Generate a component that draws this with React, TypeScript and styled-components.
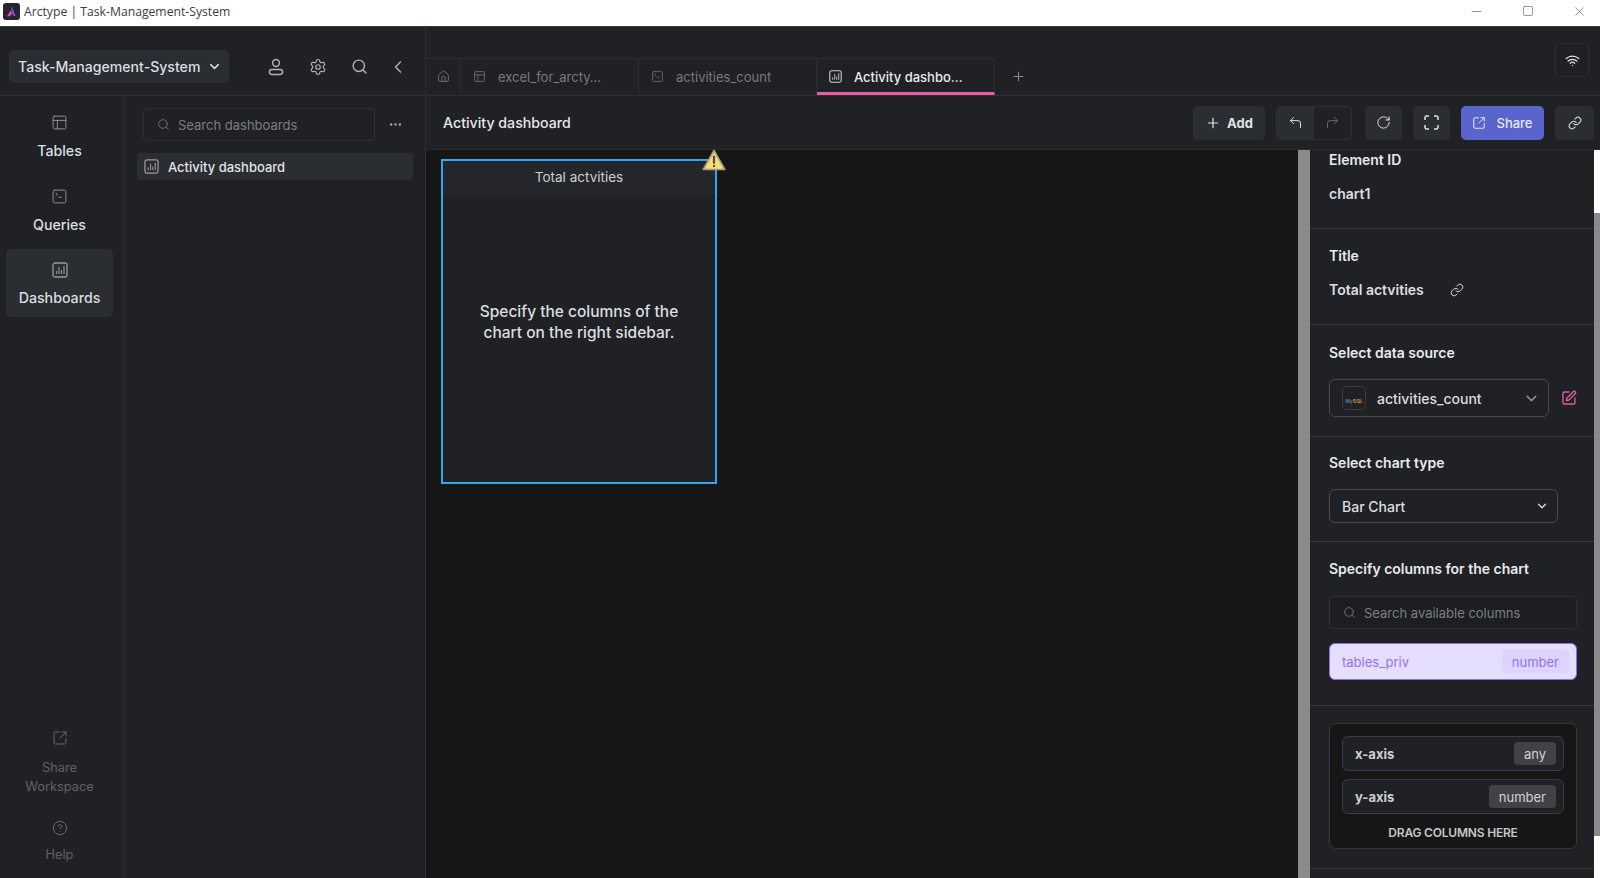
import React from "react";
import styled, { createGlobalStyle } from "styled-components";
import {
  ChevronDown,
  ChevronLeft,
  CircleHelp,
  CornerUpLeft,
  CornerUpRight,
  Ellipsis,
  Home,
  Link,
  Minus,
  PanelsTopLeft,
  Plus,
  RotateCw,
  Search,
  Settings,
  SquareArrowOutUpRight,
  SquarePen,
  SquareTerminal,
  Square,
  Wifi,
  X,
} from "lucide-react";

const GlobalStyle = createGlobalStyle`
  html, body {
    margin: 0;
    height: 100%;
    background: #1f2125;
    font-family: "Inter", "Liberation Sans", sans-serif;
    overflow: hidden;
  }
  * { box-sizing: border-box; }
`;

const Page = styled.div`
  width: 1600px;
  height: 878px;
  display: flex;
  flex-direction: column;
  background: #1f2125;
  color: #e8e9ea;
`;

const TitleBar = styled.div`
  height: 27px;
  flex: none;
  background: #fff;
  border-bottom: 1px solid #3a3c40;
  display: flex;
  align-items: center;
  padding: 0 0 4px 3px;
  color: #3c3c3c;
  font-family: "Open Sans", sans-serif;
  font-size: 12.2px;
`;

const LogoBox = styled.svg`
  width: 17px;
  height: 17px;
  margin-right: 4px;
`;

const WindowButtons = styled.div`
  margin-left: auto;
  display: flex;
  align-items: center;
  gap: 38px;
  padding-right: 13px;
  color: #555;
`;

const Body = styled.div`
  flex: 1;
  display: flex;
  min-height: 0;
`;

const LeftColumn = styled.div`
  width: 426px;
  flex: none;
  display: flex;
  flex-direction: column;
  border-right: 1px solid #2b2e33;
`;

const LeftHeader = styled.div`
  height: 69px;
  flex: none;
  display: flex;
  align-items: center;
  padding: 11px 0 0 9px;
  border-bottom: 1px solid #2e3136;
`;

const WorkspaceSelect = styled.div`
  width: 220px;
  height: 33px;
  border-radius: 5px;
  background: #2a2d32;
  display: flex;
  align-items: center;
  padding: 0 7px 0 9px;
  justify-content: space-between;
  font-size: 14.1px;
  font-weight: 500;
  white-space: nowrap;
  color: #dcdde0;
`;

const HeaderIcons = styled.div`
  display: flex;
  align-items: center;
  gap: 24px;
  margin-left: 38px;
  color: #aeb0b4;
`;

const CollapseIcon = styled(ChevronLeft)`
  margin-left: -4px;
`;

const LeftBody = styled.div`
  flex: 1;
  display: flex;
  min-height: 0;
`;

const Rail = styled.div`
  width: 125px;
  flex: none;
  border-right: 1px solid #2b2e33;
  padding: 7px 6px 0;
  display: flex;
  flex-direction: column;
`;

const RailItem = styled.div<{ $active?: boolean; $muted?: boolean; $h?: number; $gap?: number }>`
  width: 107px;
  height: ${(p) => p.$h ?? (p.$active ? 68 : 73)}px;
  border-radius: 5px;
  background: ${(p) => (p.$active ? "#2a2d32" : "transparent")};
  display: flex;
  flex-direction: column;
  align-items: center;
  padding-top: ${(p) => (p.$active ? 13 : p.$muted ? 12 : 11)}px;
  gap: ${(p) => p.$gap ?? (p.$muted ? 9 : 10)}px;
  font-size: ${(p) => (p.$muted ? 12.8 : 14.2)}px;
  font-weight: ${(p) => (p.$muted ? 400 : 500)};
  text-align: center;
  line-height: 19px;
  color: ${(p) => (p.$muted ? "#5f6165" : "#dcdde0")};
  svg {
    color: ${(p) => (p.$muted ? "#696b6f" : "#96989c")};
  }
`;

const RailBottom = styled.div`
  margin-top: auto;
  display: flex;
  flex-direction: column;
  gap: 2px;
  padding-bottom: 6px;
`;

const ListPanel = styled.div`
  flex: 1;
  padding: 12px 12px 0;
  display: flex;
  flex-direction: column;
  gap: 12px;
`;

const SearchRow = styled.div`
  display: flex;
  align-items: center;
  padding-left: 6px;
`;

const SearchBox = styled.div<{ $w?: number; $dim?: boolean }>`
  width: ${(p) => p.$w ?? 232}px;
  height: 33px;
  border: 1px solid #2e3136;
  border-radius: 4px;
  display: flex;
  align-items: center;
  gap: 8px;
  padding-left: 13px;
  font-size: 13px;
  color: #7c7e82;
  background: ${(p) => (p.$dim ? "#1c1e22" : "transparent")};
  svg {
    color: #6c6e72;
  }
`;

const MoreButton = styled.div`
  margin-left: 13px;
  color: #a2a4a8;
  display: flex;
`;

const ListRow = styled.div`
  height: 27px;
  border-radius: 3px;
  background: #2a2d32;
  display: flex;
  align-items: center;
  gap: 9px;
  padding-left: 7px;
  font-size: 13px;
  font-weight: 500;
  color: #e2e3e5;
  svg {
    color: #9a9ca0;
  }
`;

const Main = styled.div`
  flex: 1;
  min-width: 0;
  display: flex;
  flex-direction: column;
`;

const TabBar = styled.div`
  height: 69px;
  flex: none;
  display: flex;
  align-items: flex-end;
  border-bottom: 1px solid #2e3136;
  position: relative;
`;

const Tab = styled.div<{ $active?: boolean; $w?: number }>`
  width: ${(p) => p.$w ?? 178}px;
  height: 37px;
  display: flex;
  align-items: center;
  gap: 12px;
  padding: 2px 0 0 ${(p) => (p.$w ? 11 : 12)}px;
  border-top: 1px solid #2b2e33;
  border-right: 1px solid #2b2e33;
  border-bottom: 3px solid ${(p) => (p.$active ? "#ec5ca8" : "transparent")};
  border-top-right-radius: ${(p) => (p.$active ? 4 : 0)}px;
  font-size: 13px;
  font-weight: ${(p) => (p.$active ? 500 : 400)};
  color: ${(p) => (p.$active ? "#e8e9ea" : "#77797d")};
  svg {
    color: ${(p) => (p.$active ? "#cfd0d3" : "#77797d")};
  }
`;

const AddTab = styled.div`
  margin: 0 0 5px 0;
  padding-left: 16px;
  height: 28px;
  display: flex;
  align-items: center;
  color: #85878b;
`;

const WifiButton = styled.div`
  position: absolute;
  right: 11px;
  top: 16px;
  width: 34px;
  height: 34px;
  border: 1px solid #2e3136;
  border-radius: 5px;
  display: flex;
  align-items: center;
  justify-content: center;
  color: #dfe0e2;
`;

const Toolbar = styled.div`
  height: 54px;
  flex: none;
  display: flex;
  align-items: center;
  padding: 0 6px 0 17px;
  border-bottom: 1px solid #2a2c31;
  font-size: 14.2px;
  font-weight: 500;
  color: #e6e7e9;
`;

const ToolbarActions = styled.div`
  margin-left: auto;
  display: flex;
  align-items: center;
  gap: 11px;
`;

const ToolButton = styled.div<{ $w: number; $primary?: boolean }>`
  width: ${(p) => p.$w}px;
  height: 34px;
  border-radius: 5px;
  display: flex;
  align-items: center;
  justify-content: center;
  gap: ${(p) => (p.$primary ? 10 : 6)}px;
  background: ${(p) => (p.$primary ? "#5a64cd" : "#2a2d32")};
  color: ${(p) => (p.$primary ? "#e9eafa" : "#e1e2e4")};
  font-size: 13px;
  font-weight: ${(p) => (p.$primary ? 500 : 700)};
`;

const UndoGroup = styled.div`
  width: 76px;
  height: 34px;
  margin-right: 2px;
  border: 1px solid #2e3136;
  border-radius: 5px;
  display: flex;
  overflow: hidden;
`;

const UndoCell = styled.div<{ $on?: boolean }>`
  flex: 1;
  display: flex;
  align-items: center;
  justify-content: center;
  background: ${(p) => (p.$on ? "#2a2d32" : "transparent")};
  color: ${(p) => (p.$on ? "#dfe0e2" : "#66686c")};
`;

const Workspace = styled.div`
  flex: 1;
  display: flex;
  min-height: 0;
`;

const Canvas = styled.div`
  flex: 1;
  min-width: 0;
  background: #161617;
  padding: 9px 0 0 15px;
`;

const ChartCard = styled.div`
  position: relative;
  width: 276px;
  height: 325px;
  border: 2px solid #36a3ee;
  background: #1f2125;
  display: flex;
  flex-direction: column;
`;

const CardTitle = styled.div`
  height: 34px;
  flex: none;
  padding-bottom: 2px;
  background: #24262b;
  display: flex;
  align-items: center;
  justify-content: center;
  font-size: 13.5px;
  color: #cfd0d3;
`;

const CardBody = styled.div`
  flex: 1;
  display: flex;
  align-items: center;
  justify-content: center;
  text-align: center;
  padding: 0 28px 34px;
  font-size: 15.5px;
  font-weight: 500;
  line-height: 21px;
  color: #dcdde0;
`;

const WarningMark = styled.svg`
  position: absolute;
  top: -12px;
  right: -11px;
  width: 24px;
  height: 22px;
`;

const Gutter = styled.div`
  width: 12px;
  flex: none;
  background: #8a8a8a;
`;

const Props = styled.div`
  width: 284px;
  flex: none;
  overflow: hidden;
`;

const ScrollTrack = styled.div`
  width: 6px;
  flex: none;
  background: linear-gradient(
    #fff 0,
    #fff 63px,
    #8a8a8a 63px,
    #8a8a8a 686px,
    #fff 686px
  );
`;

const Section = styled.div<{ $top: number; $bottom: number; $gap?: number }>`
  padding: ${(p) => p.$top}px 17px ${(p) => p.$bottom}px 19px;
  border-bottom: 1px solid #36383c;
  display: flex;
  flex-direction: column;
  gap: ${(p) => p.$gap ?? 14}px;
`;

const Label = styled.div`
  font-size: 14px;
  font-weight: 600;
  line-height: 20px;
  color: #e8e9ea;
`;

const Value = styled.div`
  display: flex;
  align-items: center;
  gap: 26px;
  font-size: 14px;
  font-weight: 600;
  line-height: 20px;
  color: #dcdde0;
  svg {
    color: #d5d6d8;
  }
`;

const SourceRow = styled.div`
  display: flex;
  align-items: center;
  gap: 12px;
`;

const SelectBox = styled.div<{ $w: number; $h: number }>`
  width: ${(p) => p.$w}px;
  height: ${(p) => p.$h}px;
  border: 1px solid #4a4c50;
  border-radius: 6px;
  display: flex;
  align-items: center;
  justify-content: space-between;
  padding: 0 8px 0 12px;
  font-size: 14px;
  font-weight: 500;
  color: #dcdde0;
`;

const SourceName = styled.div`
  display: flex;
  align-items: center;
  gap: 11px;
`;

const DbIcon = styled.div`
  width: 24px;
  height: 24px;
  border: 1px solid #3a3c40;
  border-radius: 5px;
  display: flex;
  align-items: flex-end;
  justify-content: center;
  padding-bottom: 5px;
  font-size: 5px;
  font-weight: 700;
  color: #4d7a96;
`;

const DbAccent = styled.span`
  color: #d08a2c;
`;

const ColumnChip = styled.div`
  height: 37px;
  margin-top: -3px;
  border: 1px solid #8b6ff0;
  border-radius: 6px;
  background: #e6deff;
  display: flex;
  align-items: center;
  justify-content: space-between;
  padding: 0 7px 0 12px;
  font-size: 13px;
  color: #9073f5;
`;

const TypeTag = styled.div`
  height: 23px;
  padding: 0 10px;
  border-radius: 4px;
  background: #ddd3ff;
  display: flex;
  align-items: center;
`;

const DropZone = styled.div`
  height: 126px;
  border: 1px solid #36383c;
  border-radius: 7px;
  background: #161617;
  padding: 12px 12px 0;
  display: flex;
  flex-direction: column;
  gap: 8px;
`;

const AxisRow = styled.div`
  height: 35px;
  flex: none;
  border: 1px solid #3a3c40;
  border-radius: 6px;
  background: #1f2125;
  display: flex;
  align-items: center;
  justify-content: space-between;
  padding: 0 7px 0 12px;
  font-size: 13px;
  font-weight: 700;
  color: #cfd0d3;
`;

const AxisType = styled.div`
  height: 23px;
  padding: 0 10px;
  border-radius: 4px;
  background: #404246;
  display: flex;
  align-items: center;
  font-size: 13px;
  font-weight: 400;
  color: #d3d4d6;
`;

const DropHint = styled.div`
  text-align: center;
  font-size: 12px;
  font-weight: 600;
  margin-top: 3px;
  letter-spacing: -0.2px;
  color: #c5c6c9;
`;

const UserIcon = () => (
  <svg width="18" height="18" viewBox="0 0 18 18" fill="none" stroke="currentColor" strokeWidth="1.5">
    <circle cx="9" cy="5" r="3.4" />
    <rect x="2.5" y="11.5" width="13" height="5" rx="2.4" />
  </svg>
);

const ChartIcon = ({ size = 15 }: { size?: number }) => (
  <svg width={size} height={size} viewBox="0 0 16 16" fill="none" stroke="currentColor">
    <rect x="1" y="1" width="14" height="14" rx="2" strokeWidth="1.3" />
    <path d="M4.5 12V9M7 12V5M9.5 12V8M12 12V4" strokeWidth="1.1" />
  </svg>
);

const Arctype = () => (
  <LogoBox viewBox="0 0 17 17">
    <rect width="17" height="17" rx="3" fill="#26242e" />
    <path d="M8.6 3 L12.6 13 H10.4 L8.4 7.6 Z" fill="#7a55ee" />
    <path d="M7.6 7.6 L9.2 11 L6.6 13.2 H4 Z" fill="#e0559f" />
  </LogoBox>
);

export default function App() {
  return (
    <Page>
      <GlobalStyle />
      <TitleBar>
        <Arctype />
        Arctype | Task-Management-System
        <WindowButtons>
          <Minus size={15} strokeWidth={1} />
          <Square size={12} strokeWidth={1.2} />
          <X size={15} strokeWidth={1} />
        </WindowButtons>
      </TitleBar>
      <Body>
        <LeftColumn>
          <LeftHeader>
            <WorkspaceSelect>
              Task-Management-System
              <ChevronDown size={15} strokeWidth={2.4} />
            </WorkspaceSelect>
            <HeaderIcons>
              <UserIcon />
              <Settings size={18} strokeWidth={1.6} />
              <Search size={17} strokeWidth={2} />
              <CollapseIcon size={20} strokeWidth={1.8} />
            </HeaderIcons>
          </LeftHeader>
          <LeftBody>
            <Rail>
              <RailItem $h={74}>
                <PanelsTopLeft size={17} strokeWidth={1.3} />
                Tables
              </RailItem>
              <RailItem $h={72}>
                <SquareTerminal size={17} strokeWidth={1.3} />
                Queries
              </RailItem>
              <RailItem $active>
                <ChartIcon size={16} />
                Dashboards
              </RailItem>
              <RailBottom>
                <RailItem $muted $h={88} $gap={12}>
                  <SquareArrowOutUpRight size={16} strokeWidth={1.5} />
                  <span>
                    Share
                    <br />
                    Workspace
                  </span>
                </RailItem>
                <RailItem $muted $h={64}>
                  <CircleHelp size={16} strokeWidth={1.5} />
                  Help
                </RailItem>
              </RailBottom>
            </Rail>
            <ListPanel>
              <SearchRow>
                <SearchBox>
                  <Search size={13} strokeWidth={1.8} />
                  Search dashboards
                </SearchBox>
                <MoreButton>
                  <Ellipsis size={15} />
                </MoreButton>
              </SearchRow>
              <ListRow>
                <ChartIcon />
                Activity dashboard
              </ListRow>
            </ListPanel>
          </LeftBody>
        </LeftColumn>
        <Main>
          <TabBar>
            <Tab $w={35}>
              <Home size={13} strokeWidth={1.6} />
            </Tab>
            <Tab>
              <PanelsTopLeft size={13} strokeWidth={1.4} />
              excel_for_arcty...
            </Tab>
            <Tab>
              <SquareTerminal size={13} strokeWidth={1.4} />
              activities_count
            </Tab>
            <Tab $active>
              <ChartIcon size={13} />
              Activity dashbo...
            </Tab>
            <AddTab>
              <Plus size={15} strokeWidth={1.6} />
            </AddTab>
            <WifiButton>
              <Wifi size={15} strokeWidth={2} />
            </WifiButton>
          </TabBar>
          <Toolbar>
            Activity dashboard
            <ToolbarActions>
              <ToolButton $w={72}>
                <Plus size={16} strokeWidth={1.8} />
                Add
              </ToolButton>
              <UndoGroup>
                <UndoCell $on>
                  <CornerUpLeft size={15} strokeWidth={1.6} />
                </UndoCell>
                <UndoCell>
                  <CornerUpRight size={15} strokeWidth={1.6} />
                </UndoCell>
              </UndoGroup>
              <ToolButton $w={37}>
                <RotateCw size={15} strokeWidth={1.6} />
              </ToolButton>
              <ToolButton $w={37}>
                <svg width="15" height="15" viewBox="0 0 15 15" fill="none" stroke="currentColor" strokeWidth="1.5">
                  <path d="M1 5V2.5A1.5 1.5 0 0 1 2.5 1H5M10 1h2.5A1.5 1.5 0 0 1 14 2.5V5M14 10v2.5a1.5 1.5 0 0 1-1.5 1.5H10M5 14H2.5A1.5 1.5 0 0 1 1 12.5V10" />
                </svg>
              </ToolButton>
              <ToolButton $w={83} $primary>
                <SquareArrowOutUpRight size={14} strokeWidth={1.7} />
                Share
              </ToolButton>
              <ToolButton $w={39}>
                <Link size={14} strokeWidth={1.8} />
              </ToolButton>
            </ToolbarActions>
          </Toolbar>
          <Workspace>
            <Canvas>
              <ChartCard>
                <CardTitle>Total actvities</CardTitle>
                <CardBody>Specify the columns of the chart on the right sidebar.</CardBody>
                <WarningMark viewBox="0 0 24 22">
                  <path
                    d="M12 1.5 L22.8 20.5 H1.2 Z"
                    fill="#f8dc78"
                    stroke="#a8a07c"
                    strokeWidth="1.6"
                    strokeLinejoin="round"
                  />
                  <path d="M12 7.5V14" stroke="#55503e" strokeWidth="2.2" strokeLinecap="round" />
                  <circle cx="12" cy="17" r="1.2" fill="#55503e" />
                </WarningMark>
              </ChartCard>
            </Canvas>
            <Gutter />
            <Props>
              <Section $top={0} $bottom={24}>
                <Label>Element ID</Label>
                <Value>chart1</Value>
              </Section>
              <Section $top={17} $bottom={24}>
                <Label>Title</Label>
                <Value>
                  Total actvities
                  <Link size={14} strokeWidth={1.7} />
                </Value>
              </Section>
              <Section $top={18} $bottom={19} $gap={16}>
                <Label>Select data source</Label>
                <SourceRow>
                  <SelectBox $w={221} $h={38}>
                    <SourceName>
                      <DbIcon>
                        <span>
                          My<DbAccent>SQL</DbAccent>
                        </span>
                      </DbIcon>
                      activities_count
                    </SourceName>
                    <ChevronDown size={17} strokeWidth={2} color="#8f9195" />
                  </SelectBox>
                  <SquarePen size={16} strokeWidth={2} color="#dd5fa6" />
                </SourceRow>
              </Section>
              <Section $top={16} $bottom={18} $gap={16}>
                <Label>Select chart type</Label>
                <SelectBox $w={229} $h={34}>
                  Bar Chart
                  <ChevronDown size={14} strokeWidth={2.4} color="#d5d6d8" />
                </SelectBox>
              </Section>
              <Section $top={17} $bottom={25} $gap={17}>
                <Label>Specify columns for the chart</Label>
                <SearchBox $w={248} $dim>
                  <Search size={13} strokeWidth={1.8} />
                  Search available columns
                </SearchBox>
                <ColumnChip>
                  tables_priv
                  <TypeTag>number</TypeTag>
                </ColumnChip>
              </Section>
              <Section $top={17} $bottom={19}>
                <DropZone>
                  <AxisRow>
                    x-axis
                    <AxisType>any</AxisType>
                  </AxisRow>
                  <AxisRow>
                    y-axis
                    <AxisType>number</AxisType>
                  </AxisRow>
                  <DropHint>DRAG COLUMNS HERE</DropHint>
                </DropZone>
              </Section>
            </Props>
            <ScrollTrack />
          </Workspace>
        </Main>
      </Body>
    </Page>
  );
}
